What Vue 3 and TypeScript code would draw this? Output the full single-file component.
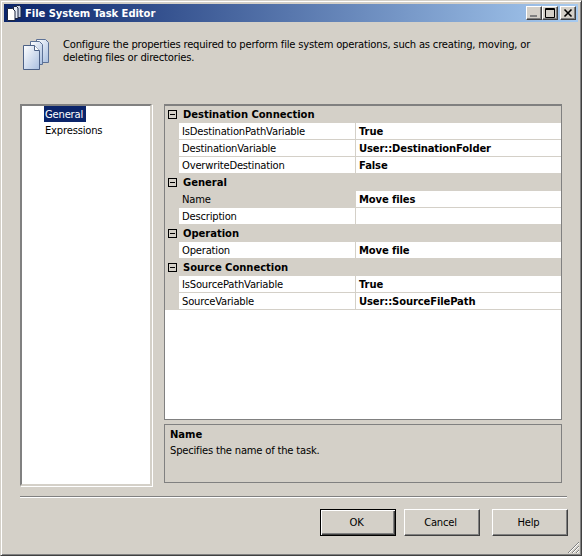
<script setup lang="ts">
interface Row { name: string; value: string; selected?: boolean }
interface Group { title: string; rows: Row[] }
const groups: Group[] = [
  { title: 'Destination Connection', rows: [
    { name: 'IsDestinationPathVariable', value: 'True' },
    { name: 'DestinationVariable', value: 'User::DestinationFolder' },
    { name: 'OverwriteDestination', value: 'False' },
  ] },
  { title: 'General', rows: [
    { name: 'Name', value: 'Move files', selected: true },
    { name: 'Description', value: '' },
  ] },
  { title: 'Operation', rows: [{ name: 'Operation', value: 'Move file' }] },
  { title: 'Source Connection', rows: [
    { name: 'IsSourcePathVariable', value: 'True' },
    { name: 'SourceVariable', value: 'User::SourceFilePath' },
  ] },
]
</script>

<template>
  <div class="window">
    <div class="titlebar">
      <svg class="title-icon" width="16" height="16" viewBox="0 0 16 16">
        <path d="M10.500 .5h3l1.500 1.500v10.500h-4.500z" fill="#c8d2e6" stroke="#1c2640" />
        <path d="M7.500 1.500h3l1.500 1.500v10.500H7.500z" fill="#e4eaf5" stroke="#1c2640" />
        <path d="M1.500 3.500h5l2.500 2.500v9.500H1.500z" fill="#fff" stroke="#1c2640" />
      </svg>
      <span class="title">File System Task Editor</span>
      <div class="caption-buttons">
        <div class="cap"><svg width="14" height="12" viewBox="0 0 14 12"><rect x="3" y="8" width="7" height="2" fill="#808080" /></svg></div>
        <div class="cap"><svg width="14" height="12" viewBox="0 0 14 12"><path d="M2.500 1.500h9v9h-9z M2 2.500h10" fill="none" stroke="#000" /></svg></div>
        <div class="cap close"><svg width="14" height="12" viewBox="0 0 14 12"><path d="M3.500 2.500l7 7M10.500 2.500l-7 7" fill="none" stroke="#000" stroke-width="1.6" /></svg></div>
      </div>
    </div>

    <div class="intro">
      <svg class="intro-icon" width="27" height="31" viewBox="0 0 27 31">
        <defs>
          <linearGradient id="pg" x1="0" y1="0" x2="1" y2="1">
            <stop offset="0" stop-color="#ffffff" />
            <stop offset="1" stop-color="#a9bfe0" />
          </linearGradient>
        </defs>
        <path d="M13.500 .5h9l3 3v20h-12z" fill="url(#pg)" stroke="#5c7196" />
        <path d="M7.500 2.500h9l3 3v20h-12z" fill="url(#pg)" stroke="#5c7196" />
        <path d="M.5 6.500h11l5 5v19H.5z" fill="url(#pg)" stroke="#4c6186" />
        <path d="M11.500 6.500v5h5" fill="#fff" stroke="#4c6186" />
      </svg>
      <p class="intro-text">Configure the properties required to perform file system operations, such as creating, moving, or deleting files or directories.</p>
    </div>

    <div class="main">
      <div class="nav">
        <div class="nav-item"><span class="selected">General</span></div>
        <div class="nav-item"><span>Expressions</span></div>
      </div>
      <div class="right">
        <div class="grid">
          <template v-for="g in groups" :key="g.title">
            <div class="cat">
              <span class="toggle"><svg width="9" height="9" viewBox="0 0 9 9"><rect x=".5" y=".5" width="8" height="8" fill="none" stroke="#000" /><path d="M2 4.500h5" stroke="#000" /></svg></span>
              <span class="cat-title">{{ g.title }}</span>
            </div>
            <div v-for="r in g.rows" :key="r.name" class="row">
              <div class="name" :class="{ 'name-selected': r.selected }">{{ r.name }}</div>
              <div class="value">{{ r.value }}</div>
            </div>
          </template>
        </div>
        <div class="help">
          <div class="help-title">Name</div>
          <div class="help-text">Specifies the name of the task.</div>
        </div>
      </div>
    </div>

    <div class="sep"></div>

    <div class="footer">
      <button class="btn default">OK</button>
      <button class="btn">Cancel</button>
      <button class="btn help-btn">Help</button>
    </div>

    <svg class="grip" width="14" height="14" viewBox="0 0 14 14">
      <path d="M13 2L2 13M13 6L6 13M13 10L10 13" stroke="#808080" fill="none" />
      <path d="M13 3L3 13M13 7L7 13M13 11L11 13" stroke="#fff" fill="none" />
    </svg>
  </div>
</template>

<style>
html, body { margin: 0; padding: 0; background: #d4d0c8; }
</style>

<style scoped>
.window {
  position: relative;
  box-sizing: border-box;
  width: 582px;
  height: 556px;
  background: #d4d0c8;
  border-style: solid;
  border-width: 1px;
  border-color: #d4d0c8 #404040 #404040 #d4d0c8;
  box-shadow: inset 1px 1px 0 #fff, inset -1px -1px 0 #808080;
  padding: 3px 3px 0;
  font-family: "DejaVu Sans", sans-serif;
  font-size: 10px;
  letter-spacing: -0.2px;
  color: #000;
  display: flex;
  flex-direction: column;
}
.titlebar {
  height: 18px;
  flex: none;
  display: flex;
  align-items: center;
  background: linear-gradient(90deg, #0a246a, #a6caf0);
  color: #fff;
  padding: 0 2px;
}
.title-icon { flex: none; margin-right: 3px; }
.title {
  font-weight: 700;
  letter-spacing: -0.05px;
}
.caption-buttons { margin-left: auto; display: flex; }
.cap {
  box-sizing: border-box;
  width: 16px;
  height: 14px;
  background: #d4d0c8;
  border: 1px solid;
  border-color: #fff #404040 #404040 #fff;
  box-shadow: inset -1px -1px 0 #808080;
  display: flex;
  align-items: center;
  justify-content: center;
}
.close { margin-left: 2px; }
.intro {
  flex: none;
  height: 82px;
  display: flex;
  padding: 16px 0 0 19px;
  box-sizing: border-box;
}
.intro-icon { flex: none; margin-top: 1px; }
.intro-text {
  margin: 0 0 0 13px;
  width: 490px;
  line-height: 13px;
}
.main {
  flex: none;
  display: flex;
  height: 384px;
  padding-left: 16px;
  box-sizing: border-box;
}
.nav {
  box-sizing: border-box;
  width: 132px;
  height: 382px;
  background: #fff;
  border: 2px solid;
  border-color: #808080 #d4d0c8 #d4d0c8 #808080;
  box-shadow: 1px 1px 0 #fff;
  padding-left: 22px;
}
.nav-item { height: 16px; line-height: 15px; }
.nav-item span { display: inline-block; padding: 1px 3px 0 1px; vertical-align: top; }
.selected { background: #0a246a; color: #fff; }
.right {
  margin-left: 12px;
  width: 398px;
  display: flex;
  flex-direction: column;
}
.grid {
  box-sizing: border-box;
  height: 316px;
  flex: none;
  background: #fff;
  border: 1px solid #808080;
  border-top-width: 2px;
  border-top-color: #808080;
}
.cat {
  height: 17px;
  background: #d4d0c8;
  display: flex;
  align-items: center;
}
.toggle { width: 18px; padding-left: 3px; box-sizing: border-box; display: flex; }
.cat-title { font-weight: 700; letter-spacing: -0.03px; }
.row {
  height: 17px;
  box-sizing: border-box;
  display: flex;
  background: #fff;
  margin-left: 14px;
  border-bottom: 1px solid #d4d0c8;
  position: relative;
  line-height: 17px;
}
.row::before {
  content: "";
  position: absolute;
  left: -14px;
  top: 0;
  bottom: -1px;
  width: 14px;
  background: #d4d0c8;
}
.name {
  box-sizing: border-box;
  width: 177px;
  padding-left: 3px;
  border-right: 1px solid #d4d0c8;
  white-space: nowrap;
}
.name-selected { background: #d4d0c8; }
.value {
  padding-left: 3px;
  font-weight: 700;
  letter-spacing: -0.12px;
  white-space: nowrap;
}
.help {
  box-sizing: border-box;
  margin-top: 4px;
  height: 59px;
  flex: none;
  border: 1px solid #808080;
  padding: 2px 5px;
  line-height: 16px;
}
.help-title { font-weight: 700; letter-spacing: 0; }
.sep {
  flex: none;
  margin: 8px 11px 0 16px;
  height: 1px;
  background: #808080;
  border-bottom: 1px solid #fff;
}
.footer {
  flex: none;
  display: flex;
  justify-content: flex-end;
  margin-top: 11px;
  padding-right: 10px;
  gap: 8px;
}
.btn {
  box-sizing: border-box;
  width: 76px;
  height: 27px;
  padding: 0 3px 0 0;
  background: #d4d0c8;
  font: inherit;
  letter-spacing: inherit;
  color: #000;
  border: 1px solid;
  border-color: #fff #404040 #404040 #fff;
  box-shadow: inset -1px -1px 0 #808080;
}
.default {
  border: 1px solid #000;
  box-shadow: inset 1px 1px 0 #fff, inset -1px -1px 0 #404040, inset -2px -2px 0 #808080;
}
.help-btn { margin-left: 4px; }
.grip { position: absolute; right: 1px; bottom: 1px; }
</style>
